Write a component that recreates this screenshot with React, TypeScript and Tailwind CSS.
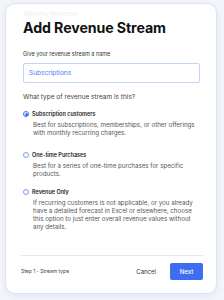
import { useState } from 'react';

const OPTIONS = [
  {
    id: 'subscription',
    label: 'Subscription customers',
    desc: 'Best for subscriptions, memberships, or other offerings with monthly recurring charges.',
  },
  {
    id: 'one-time',
    label: 'One-time Purchases',
    desc: 'Best for a series of one-time purchases for specific products.',
  },
  {
    id: 'revenue',
    label: 'Revenue Only',
    desc: 'If recurring customers is not applicable, or you already have a detailed forecast in Excel or elsewhere, choose this option to just enter overall revenue values without any details.',
  },
];

function Radio({ checked }: { checked: boolean }) {
  return (
    <span
      className={`flex h-[6px] w-[6px] shrink-0 items-center justify-center rounded-full border-[0.75px] ${
        checked ? 'border-[#3b6ef0]' : 'border-[#7b9cf3]'
      }`}
    >
      {checked && <span className="h-[3px] w-[3px] rounded-full bg-[#3b6ef0]" />}
    </span>
  );
}

export default function App() {
  const [selected, setSelected] = useState('subscription');
  const [name, setName] = useState('Subscriptions');

  return (
    <div
      className="relative h-[300px] w-[224px] overflow-hidden bg-[#f3f5fa] pl-[5px] pt-[3px]"
      style={{ fontFamily: 'Inter, "Liberation Sans", sans-serif' }}
    >
      {/* Modal */}
      <div className="relative flex h-[291px] w-[212px] flex-col rounded-[10px] border border-[#dbe3f7] bg-white pt-[15px] shadow-[0_2px_6px_rgba(60,80,140,0.08)]">
        <span className="pointer-events-none absolute left-[18px] top-[6px] text-[6.5px] leading-[8px] text-[#eeeff3]">
          Monthly Revenue
        </span>

        <div className="flex flex-col pl-[17px] pr-[16px]">
          <h1 className="text-[14.2px] font-bold leading-[18px] tracking-[-0.1px] text-[#111]">
            Add Revenue Stream
          </h1>

          <label className="mt-[13px] text-[5.5px] leading-[8px] text-[#333]">
            Give your revenue stream a name
          </label>
          <input
            value={name}
            onChange={(e) => setName(e.target.value)}
            className="mt-[5px] h-[20px] w-full rounded-[2px] border border-[#c4d4fa] px-[5px] text-[6.5px] text-[#4f7bf0] outline-none"
          />

          <p className="mt-[10px] text-[6.5px] leading-[9px] text-[#444]">
            What type of revenue stream is this?
          </p>

          <div className="flex flex-col">
            {OPTIONS.map((opt, i) => (
              <button
                key={opt.id}
                onClick={() => setSelected(opt.id)}
                className={`flex flex-col text-left ${i === 0 ? 'mt-[8px]' : i === 1 ? 'mt-[14px]' : 'mt-[10px]'}`}
              >
                <span className="flex h-[8px] items-center gap-[3px]">
                  <Radio checked={selected === opt.id} />
                  <span className="text-[5.5px] font-semibold text-[#222]">{opt.label}</span>
                </span>
                <span className="mt-[3px] pl-[10px] pr-[4px] text-[6.2px] leading-[8px] text-[#555]">
                  {opt.desc}
                </span>
              </button>
            ))}
          </div>
        </div>

        {/* Footer */}
        <div className="mt-auto mb-[13px] ml-[15px] mr-[13px] flex flex-col">
          <div className="h-px bg-[#e6e8ee]" />
          <div className="mt-[7px] flex items-center">
            <span className="text-[5px] text-[#444]">Step 1 - Stream type</span>
            <button className="ml-auto text-[6px] text-[#333]">Cancel</button>
            <button className="ml-[14px] h-[17px] w-[33px] rounded-[2px] bg-[#3d6ef2] text-[6px] font-medium text-white">
              Next
            </button>
          </div>
        </div>
      </div>
    </div>
  );
}
